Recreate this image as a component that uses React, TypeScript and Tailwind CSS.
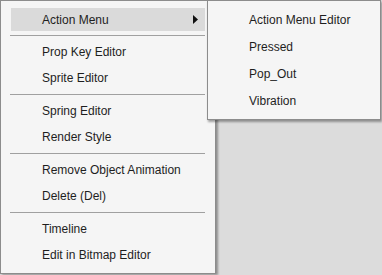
import React from 'react';

type Entry = { label: string; sub?: boolean; active?: boolean } | 'sep';

const mainItems: Entry[] = [
  { label: 'Action Menu', sub: true, active: true },
  'sep',
  { label: 'Prop Key Editor' },
  { label: 'Sprite Editor' },
  'sep',
  { label: 'Spring Editor' },
  { label: 'Render Style' },
  'sep',
  { label: 'Remove Object Animation' },
  { label: 'Delete (Del)' },
  'sep',
  { label: 'Timeline' },
  { label: 'Edit in Bitmap Editor' },
];

const subItems = ['Action Menu Editor', 'Pressed', 'Pop_Out', 'Vibration'];

export default function App() {
  return (
    <div
      className="relative w-[382px] h-[275px] overflow-hidden bg-[#dcdcdc] text-[12px] text-[#1e1e1e]"
      style={{ fontFamily: '"Liberation Sans", Arial, sans-serif' }}
    >
      {/* main context menu */}
      <div className="w-[216px] h-[274px] border border-[#8c8c8c] bg-[#f5f5f5] pt-[5px] shadow-[2px_1px_2px_rgba(0,0,0,0.35)]">
        {mainItems.map((it, i) =>
          it === 'sep' ? (
            <div key={i} className="h-[7px] flex items-center pl-[9px] pr-[10px]">
              <div className="h-px w-full bg-[#a0a0a0]" />
            </div>
          ) : (
            <div key={i} className="h-[26px] flex items-center">
              {it.active ? (
                <div className="flex items-center ml-[10px] mr-[10px] mt-[1px] h-[23px] w-full bg-[#dadada] pl-[31px] pr-[7px]">
                  <span className="flex-1">{it.label}</span>
                  <svg width="5" height="9" viewBox="0 0 5 9" className="shrink-0">
                    <path d="M0 0 L5 4.5 L0 9 Z" fill="#111" />
                  </svg>
                </div>
              ) : (
                <span className="pl-[41px]">{it.label}</span>
              )}
            </div>
          )
        )}
      </div>

      {/* sub menu */}
      <div className="absolute left-[207px] top-0 w-[174px] h-[120px] border border-[#8c8c8c] bg-[#f5f5f5] pt-[5px] shadow-[1px_2px_2px_rgba(0,0,0,0.35)]">
        {subItems.map((s) => (
          <div key={s} className="h-[27px] flex items-center pl-[41px]">
            {s}
          </div>
        ))}
      </div>
    </div>
  );
}
